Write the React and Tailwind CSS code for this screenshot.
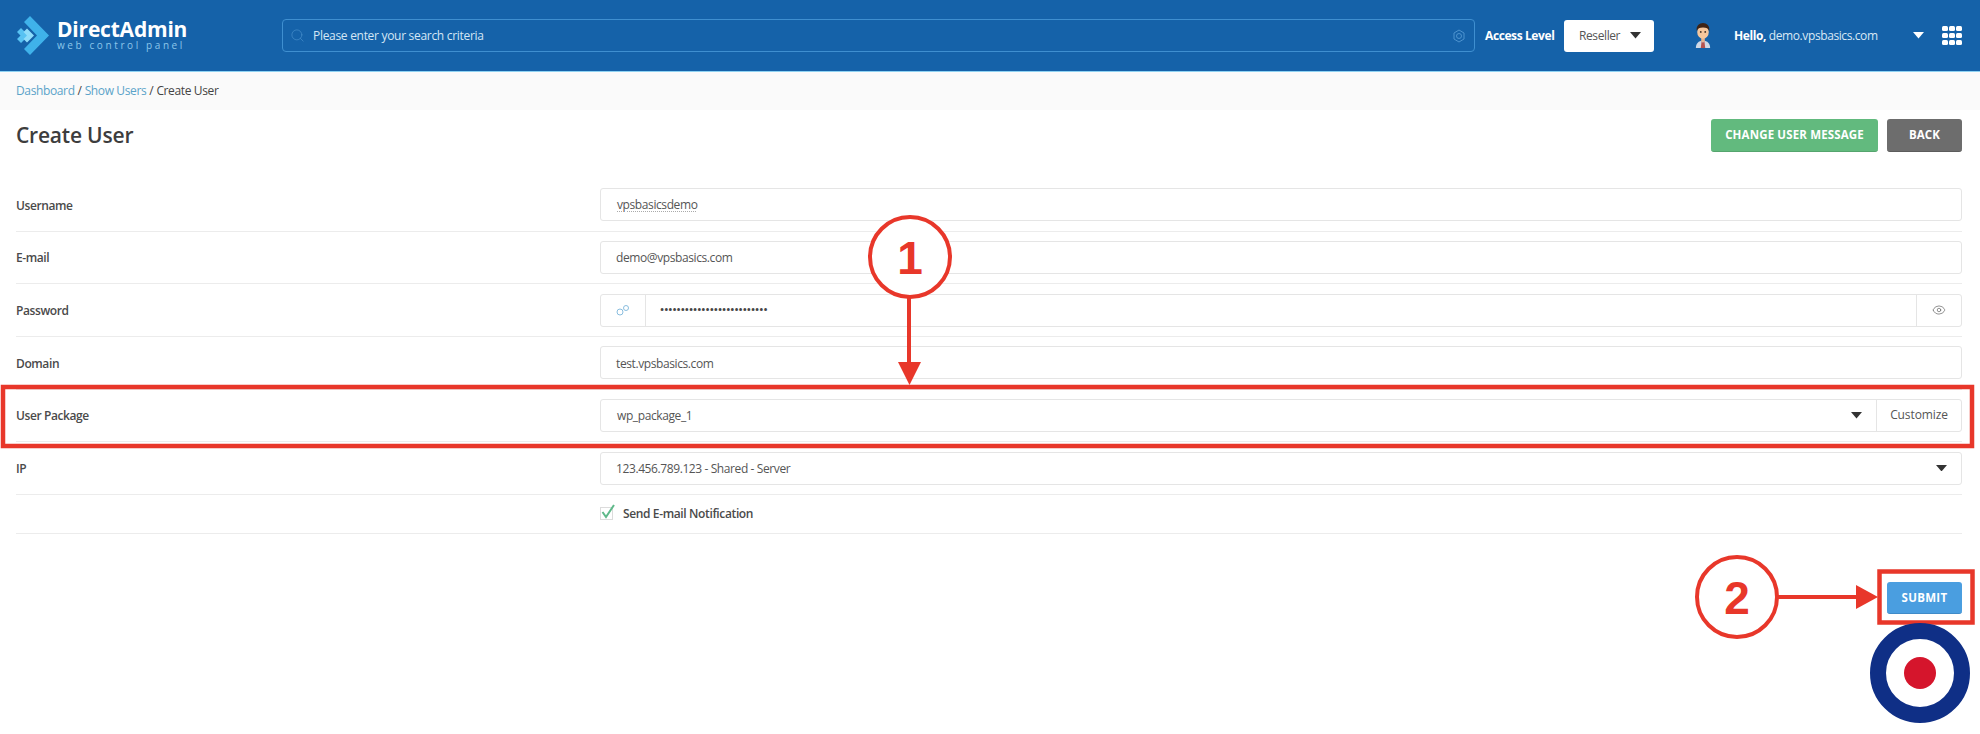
import React from "react";
import { Search, Eye } from "lucide-react";

const Caret = ({ className }) => (
  <svg width="11" height="6.5" viewBox="0 0 12 7" className={className}>
    <path d="M0 0h12L6 7z" fill="currentColor" />
  </svg>
);

const Logo = () => (
  <svg width="32" height="40" viewBox="0 0 32 40">
    <path d="M13 0 L32 19.5 L13 39 L7 33 L20 19.5 L7 6 Z" fill="#3fb2ea" />
    <path d="M4 12 L11.5 19.5 L4 27 L0 23 L3.5 19.5 L0 16 Z" fill="#58c2f2" />
    <path d="M10 12.5 L17 19.5 L10 26.5 L6.5 23 L10 19.5 L6.5 16 Z" fill="#8edcfa" />
  </svg>
);

const Avatar = () => (
  <svg width="18" height="25" viewBox="0 0 20 28">
    <path d="M2 28c0-5 3-8 8-8s8 3 8 8z" fill="#cfd8e6" />
    <path d="M8.5 20l1.5 2.5L11.5 20l1 8h-5z" fill="#b5534f" />
    <rect x="8" y="15" width="4" height="6" fill="#e8b48c" />
    <ellipse cx="10" cy="10" rx="6.5" ry="7.5" fill="#f6c79c" />
    <path d="M3 9C2 3 6 0 10 0s8 3 7 9c-1-3-3-4-7-4S4 6 3 9z" fill="#3e2416" />
    <circle cx="7.5" cy="10" r="1" fill="#3a2a20" />
    <circle cx="12.5" cy="10" r="1" fill="#3a2a20" />
  </svg>
);

const Label = ({ children }) => (
  <div className="w-[584px] shrink-0 pt-[2px] text-[12px] tracking-[-0.4px] font-semibold text-[#4a4a4a]">{children}</div>
);

const Box = ({ children, className = "" }) => (
  <div className={`flex-1 h-[33px] flex items-center border border-[#e5e5e5] rounded-[3px] bg-white text-[12px] tracking-[-0.4px] text-[#555] ${className}`}>
    {children}
  </div>
);

const Row = ({ label, children }) => (
  <div className="h-[52.67px] flex items-center border-b border-[#ececec]">
    <Label>{label}</Label>
    {children}
  </div>
);

export default function App() {
  return (
    <div className="relative w-[1980px] h-[734px] overflow-hidden bg-white font-['Open_Sans',sans-serif]">
      <header className="h-[72px] bg-[#1562a9] border-b-[1.5px] border-[#8ed2f2] flex items-center text-white">
        <div className="ml-[17px] w-[265px] flex items-center gap-[8px] shrink-0">
          <Logo />
          <div className="flex flex-col -mt-[3px]">
            <span className="text-[21px] font-bold leading-[21px] tracking-[-0.2px]">DirectAdmin</span>
            <span className="text-[10px] leading-[10px] tracking-[2.6px] text-[#8cc6ea]">web control panel</span>
          </div>
        </div>
        <div className="w-[1193px] h-[33px] shrink-0 rounded-[4px] border border-[#3f8fd0] flex items-center pl-[7px] pr-[8px]">
          <Search size={15} strokeWidth={1} className="text-[#4d93cf]" />
          <span className="ml-[8px] text-[12px] tracking-[-0.3px] text-[#d4e6f5]">Please enter your search criteria</span>
          <svg width="14" height="14" viewBox="0 0 14 14" className="ml-auto text-[#4d93cf]" fill="none" stroke="currentColor">
            <path d="M7 1l5 3v6l-5 3-5-3V4z" />
            <circle cx="7" cy="7" r="2.5" />
          </svg>
        </div>
        <span className="ml-[10px] w-[79px] shrink-0 text-[12px] tracking-[-0.4px] font-bold">Access Level</span>
        <div className="w-[90px] h-[32px] shrink-0 rounded-[3px] bg-white text-[#555] text-[12px] tracking-[-0.4px] flex items-center pl-[15px] gap-[10px]">
          Reseller <Caret className="text-[#333]" />
        </div>
        <div className="ml-[40px] shrink-0"><Avatar /></div>
        <span className="ml-[22px] w-[179px] shrink-0 text-[12px] tracking-[-0.4px] text-[#d9e8f5]"><b className="font-bold text-white">Hello,</b> demo.vpsbasics.com</span>
        <Caret className="shrink-0 text-white" />
        <div className="ml-[18px] grid grid-cols-3 gap-[1.5px] w-[20px] shrink-0">
          {[0, 1, 2, 3, 4, 5, 6, 7, 8].map((i) => (
            <span key={i} className="w-[5.6px] h-[5.6px] rounded-[1.5px] bg-white" />
          ))}
        </div>
      </header>

      <nav className="h-[38px] bg-[#fafafa] pl-[16px] flex items-center text-[12px] tracking-[-0.37px] text-[#444]">
        <span className="text-[#5aa3c9]">Dashboard</span>
        <span className="mx-[3px]">/</span>
        <span className="text-[#5aa3c9]">Show Users</span>
        <span className="mx-[3px]">/</span>
        <span>Create User</span>
      </nav>

      <div className="px-[16px] pr-[18px]">
        <div className="h-[69px] flex items-start justify-between">
          <h1 className="pt-[10px] text-[21px] font-semibold tracking-[-0.2px] text-[#3d3d3d]">Create User</h1>
          <div className="flex gap-[9px] pt-[9px]">
            <button className="w-[167px] h-[33px] rounded-[3px] bg-[#62ba7e] border-b border-[#55a56e] text-white text-[11.5px] font-bold tracking-[0.15px]">CHANGE USER MESSAGE</button>
            <button className="w-[75px] h-[33px] rounded-[3px] bg-[#6d6d6d] border-b border-[#5c5c5c] text-white text-[11.5px] font-bold tracking-[0.15px]">BACK</button>
          </div>
        </div>

        <Row label="Username">
          <Box className="pl-[16px]">
            <span className="underline decoration-dotted decoration-[#aaa] underline-offset-2 pt-[1px]">vpsbasicsdemo</span>
          </Box>
        </Row>
        <Row label="E-mail"><Box className="pl-[15px] pt-[2px]">demo@vpsbasics.com</Box></Row>
        <Row label="Password">
          <Box>
            <span className="w-[45px] h-full border-r border-[#e5e5e5] flex items-center justify-center text-[#7db6da]">
              <svg width="14" height="12" viewBox="0 0 14 12" fill="none" stroke="currentColor" strokeWidth="0.9">
                <circle cx="4" cy="8" r="3" />
                <circle cx="10" cy="4" r="2.5" />
              </svg>
            </span>
            <span className="ml-[14px] text-[11px] tracking-[0px] text-[#444] font-semibold">••••••••••••••••••••••••••</span>
            <span className="ml-auto w-[45px] h-full border-l border-[#e5e5e5] flex items-center justify-center text-[#666]">
              <Eye size={14} strokeWidth={1.2} />
            </span>
          </Box>
        </Row>
        <Row label="Domain"><Box className="pl-[15px] pt-[2px]">test.vpsbasics.com</Box></Row>
        <Row label="User Package">
          <Box className="pl-[16px]">
            <span className="pt-[1px]">wp_package_1</span>
            <Caret className="ml-auto mr-[14px] text-[#333]" />
            <span className="w-[85px] h-full border-l border-[#e5e5e5] flex items-center justify-center tracking-[-0.1px]">Customize</span>
          </Box>
        </Row>
        <Row label="IP">
          <Box className="pl-[15px]">
            <span className="pt-[1px]">123.456.789.123 - Shared - Server</span>
            <Caret className="ml-auto mr-[14px] text-[#333]" />
          </Box>
        </Row>
        <div className="h-[39px] flex items-center border-b border-[#ececec]">
          <div className="w-[584px] shrink-0" />
          <span className="relative w-[13px] h-[13px] border border-[#dcdcdc] mr-[10px]">
            <svg width="15" height="15" viewBox="0 0 15 15" className="absolute -top-[4px] left-0" fill="none" stroke="#5fb98a" strokeWidth="2">
              <path d="M1.5 8l3.5 5L13 1" />
            </svg>
          </span>
          <span className="text-[12px] tracking-[-0.37px] font-semibold text-[#4a4a4a]">Send E-mail Notification</span>
        </div>

        <div className="flex justify-end mt-[48px]">
          <button className="w-[75px] h-[32px] rounded-[3px] bg-[#4a9ee0] border-b border-[#3f8bc8] text-white text-[11.5px] font-bold tracking-[0.3px]">SUBMIT</button>
        </div>
      </div>

      <svg width="1980" height="734" viewBox="0 0 1980 734" className="absolute inset-0 pointer-events-none" fill="none">
        <rect x="3" y="387" width="1969" height="59" stroke="#e8372a" strokeWidth="4.5" />
        <rect x="1879.5" y="571.5" width="93" height="51" stroke="#e8372a" strokeWidth="4.5" />
        <circle cx="910" cy="257" r="40" stroke="#e8372a" strokeWidth="4" fill="#fff" />
        <path d="M909 297V368" stroke="#e8372a" strokeWidth="4" />
        <path d="M898 362h23l-11.5 23z" fill="#e8372a" />
        <circle cx="1737" cy="597" r="40" stroke="#e8372a" strokeWidth="4" fill="#fff" />
        <path d="M1777 597H1858" stroke="#e8372a" strokeWidth="4" />
        <path d="M1856 585l22 12-22 12z" fill="#e8372a" />
        <text x="910" y="274" textAnchor="middle" fontSize="46" fontWeight="700" fill="#e8372a" fontFamily="'Liberation Sans',sans-serif">1</text>
        <text x="1737" y="614" textAnchor="middle" fontSize="46" fontWeight="700" fill="#e8372a" fontFamily="'Liberation Sans',sans-serif">2</text>
        <circle cx="1920" cy="673" r="42" stroke="#0f2f86" strokeWidth="16" fill="#fff" />
        <circle cx="1920" cy="673" r="16" fill="#d5152c" />
      </svg>
    </div>
  );
}
